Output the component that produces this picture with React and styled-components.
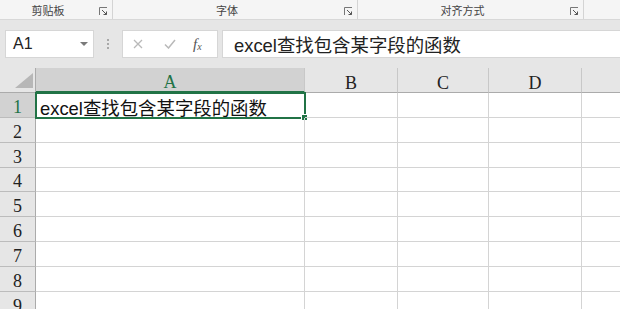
import React from "react";
import styled, { createGlobalStyle } from "styled-components";

const GlobalStyle = createGlobalStyle`
  html, body {
    margin: 0;
    padding: 0;
    background: #e6e6e6;
    overflow: hidden;
  }
`;

const SANS = `"Liberation Sans", "Noto Sans CJK SC", sans-serif`;
const SERIF = `"Liberation Serif", "Noto Sans CJK SC", serif`;

const groups = [
  { label: "剪贴板", width: 113 },
  { label: "字体", width: 245 },
  { label: "对齐方式", width: 226 },
  { label: "", width: 60 },
];

const cols = [
  { name: "A", width: 269 },
  { name: "B", width: 93 },
  { name: "C", width: 91 },
  { name: "D", width: 93 },
  { name: "E", width: 92 },
];

const rows = [1, 2, 3, 4, 5, 6, 7, 8, 9];
const cellText = "excel查找包含某字段的函数";

export default function App() {
  return (
    <>
      <GlobalStyle />
      <Screen>
        <RibbonStrip>
          {groups.map((g, i) => (
            <Group key={i} style={{ width: g.width }}>
              <GroupLabel>{g.label}</GroupLabel>
              {g.label && <Launcher />}
            </Group>
          ))}
        </RibbonStrip>

        <FormulaBar>
          <NameBox>
            <span>A1</span>
            <Caret />
          </NameBox>
          <Grip>
            <i />
            <i />
            <i />
          </Grip>
          <ButtonBox>
            <svg width="10" height="10" viewBox="0 0 10 10">
              <path d="M1 1L9 9M9 1L1 9" stroke="#b9b9b9" strokeWidth="1.3" />
            </svg>
            <svg width="12" height="10" viewBox="0 0 12 10">
              <path d="M1 5.5L4.5 9L11 1" stroke="#b9b9b9" strokeWidth="1.5" fill="none" />
            </svg>
            <Fx>
              f<sub>x</sub>
            </Fx>
          </ButtonBox>
          <FormulaInput>{cellText}</FormulaInput>
        </FormulaBar>

        <Sheet>
          <HeaderRow>
            <Corner>
              <svg width="18" height="15" viewBox="0 0 18 15">
                <polygon points="18,0 18,15 0,15" fill="#b7b7b7" />
              </svg>
            </Corner>
            {cols.map((c) => (
              <ColHeader key={c.name} $w={c.width} $active={c.name === "A"}>
                {c.name}
              </ColHeader>
            ))}
          </HeaderRow>
          {rows.map((r) => (
            <Row key={r}>
              <RowHeader $active={r === 1}>{r}</RowHeader>
              {cols.map((c) => (
                <Cell key={c.name} $w={c.width}>
                  {r === 1 && c.name === "A" && (
                    <>
                      <CellText>{cellText}</CellText>
                      <Selection>
                        <FillHandle />
                      </Selection>
                    </>
                  )}
                </Cell>
              ))}
            </Row>
          ))}
        </Sheet>
      </Screen>
    </>
  );
}

function Launcher() {
  return (
    <LauncherIcon width="9" height="9" viewBox="0 0 9 9">
      <path d="M0.5 8V0.5H8" stroke="#777" fill="none" />
      <path d="M3 3L7.5 7.5M7.5 4.5V7.5H4.5" stroke="#555" fill="none" />
    </LauncherIcon>
  );
}

const Screen = styled.div`
  width: 620px;
  height: 309px;
  overflow: hidden;
  background: #e6e6e6;
  display: flex;
  flex-direction: column;
`;

const RibbonStrip = styled.div`
  height: 19px;
  display: flex;
  background: #f5f5f5;
  border-bottom: 1px solid #d8d8d8;
  flex-shrink: 0;
`;

const Group = styled.div`
  position: relative;
  box-sizing: border-box;
  height: 100%;
  border-right: 1px solid #d4d4d4;
  display: flex;
  align-items: center;
  justify-content: center;
  padding-right: 16px;
  flex-shrink: 0;
`;

const GroupLabel = styled.span`
  font-family: ${SANS};
  font-size: 11px;
  color: #444;
`;

const LauncherIcon = styled.svg`
  position: absolute;
  right: 4px;
  bottom: 3px;
`;

const FormulaBar = styled.div`
  display: flex;
  align-items: stretch;
  height: 28px;
  margin-top: 10px;
  padding-left: 5px;
  flex-shrink: 0;
`;

const NameBox = styled.div`
  width: 89px;
  background: #fff;
  border: 1px solid #d6d6d6;
  box-sizing: border-box;
  display: flex;
  align-items: center;
  justify-content: space-between;
  padding: 0 5px 0 7px;
  font-family: ${SANS};
  font-size: 16px;
  color: #222;
`;

const Caret = styled.span`
  width: 0;
  height: 0;
  border-left: 4px solid transparent;
  border-right: 4px solid transparent;
  border-top: 4px solid #7a7a7a;
`;

const Grip = styled.div`
  width: 28px;
  display: flex;
  flex-direction: column;
  align-items: center;
  justify-content: center;
  gap: 2px;

  i {
    width: 2px;
    height: 2px;
    background: #a8a8a8;
  }
`;

const ButtonBox = styled.div`
  width: 96px;
  background: #fff;
  border: 1px solid #d6d6d6;
  box-sizing: border-box;
  display: flex;
  align-items: center;
  padding-left: 10px;

  svg + svg {
    margin-left: 21px;
  }
`;

const Fx = styled.span`
  margin-left: 17px;
  font-family: ${SERIF};
  font-style: italic;
  font-size: 15px;
  color: #555;

  sub {
    font-size: 10px;
    vertical-align: -1px;
  }
`;

const FormulaInput = styled.div`
  flex: 1;
  margin-left: 4px;
  background: #fff;
  border: 1px solid #d6d6d6;
  border-right: none;
  box-sizing: border-box;
  display: flex;
  align-items: center;
  padding-left: 11px;
  font-family: ${SANS};
  font-size: 18.4px;
  color: #222;
  white-space: nowrap;
`;

const Sheet = styled.div`
  margin-top: 10px;
  background: #fff;
  flex: 1;
`;

const HeaderRow = styled.div`
  display: flex;
  height: 25px;
  background: #e6e6e6;
`;

const Corner = styled.div`
  width: 36px;
  flex-shrink: 0;
  box-sizing: border-box;
  border-right: 1px solid #ababab;
  border-bottom: 1px solid #ababab;
  display: flex;
  align-items: flex-end;
  justify-content: flex-end;
  padding: 0 2px 4px 0;
  background: #e6e6e6;
`;

const ColHeader = styled.div`
  width: ${(p) => p.$w}px;
  flex-shrink: 0;
  box-sizing: border-box;
  border-right: 1px solid #c8c8c8;
  border-bottom: ${(p) => (p.$active ? "2px solid #217346" : "1px solid #ababab")};
  background: ${(p) => (p.$active ? "#d2d2d2" : "#e6e6e6")};
  color: ${(p) => (p.$active ? "#217346" : "#222")};
  font-family: ${SERIF};
  font-size: 18px;
  display: flex;
  align-items: center;
  justify-content: center;
  padding-top: 6px;
`;

const Row = styled.div`
  display: flex;
  height: 24.85px;
`;

const RowHeader = styled.div`
  width: 36px;
  flex-shrink: 0;
  box-sizing: border-box;
  border-right: 1px solid #ababab;
  border-bottom: 1px solid #bcbcbc;
  background: ${(p) => (p.$active ? "#d2d2d2" : "#e6e6e6")};
  color: ${(p) => (p.$active ? "#217346" : "#222")};
  font-family: ${SERIF};
  font-size: 18px;
  display: flex;
  align-items: center;
  justify-content: center;
  padding-top: 5px;
`;

const Cell = styled.div`
  position: relative;
  width: ${(p) => p.$w}px;
  flex-shrink: 0;
  box-sizing: border-box;
  border-right: 1px solid #d4d4d4;
  border-bottom: 1px solid #d4d4d4;
  display: flex;
  align-items: flex-end;
`;

const CellText = styled.span`
  padding-left: 4px;
  margin-bottom: -1px;
  font-family: ${SANS};
  font-size: 18.4px;
  line-height: 18px;
  color: #111;
  white-space: nowrap;
`;

const Selection = styled.div`
  position: absolute;
  top: -1px;
  left: -1px;
  right: -2px;
  bottom: -2px;
  border: 2px solid #217346;
`;

const FillHandle = styled.div`
  position: absolute;
  right: -4px;
  bottom: -4px;
  width: 5px;
  height: 5px;
  background: #217346;
  border: 1px solid #fff;
`;
